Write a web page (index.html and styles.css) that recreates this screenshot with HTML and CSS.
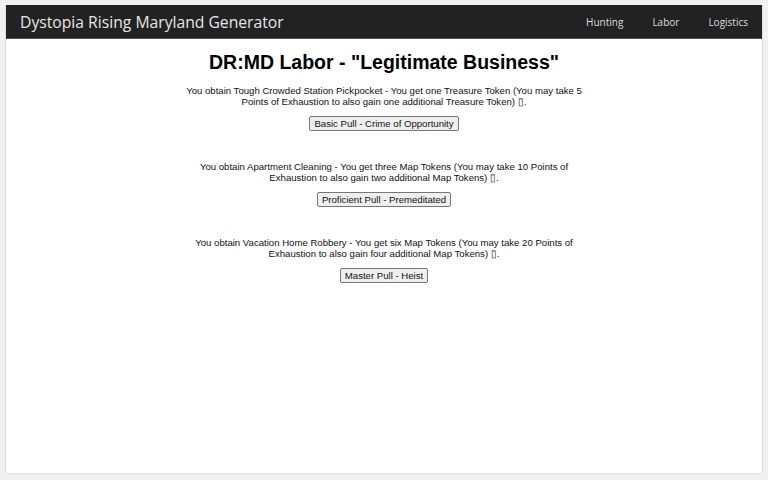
FILE: index.html
```html
<!DOCTYPE html>
<html lang="en">
<head>
    <meta charset="UTF-8">
    <meta name="viewport" content="width=device-width, initial-scale=1.0">
    <title>DR:MD Labor</title>
    <link rel="stylesheet" href="styles.css">
</head>
<body>
    <div class="page">
        <nav class="navbar">
            <span class="brand">Dystopia Rising Maryland Generator</span>
            <div class="nav-links">
                <a href="#">Hunting</a>
                <a href="#">Labor</a>
                <a href="#">Logistics</a>
            </div>
        </nav>

        <div class="content">
            <h1>DR:MD Labor - "Legitimate Business"</h1>

            <div class="pull">
                <p>You obtain Tough Crowded Station Pickpocket - You get one Treasure Token (You may take 5 Points of Exhaustion to also gain one additional Treasure Token) &#x25AF;.</p>
                <button class="pull-button">Basic Pull - Crime of Opportunity</button>
            </div>

            <div class="pull">
                <p>You obtain Apartment Cleaning - You get three Map Tokens (You may take 10 Points of Exhaustion to also gain two additional Map Tokens) &#x25AF;.</p>
                <button class="pull-button">Proficient Pull - Premeditated</button>
            </div>

            <div class="pull">
                <p>You obtain Vacation Home Robbery - You get six Map Tokens (You may take 20 Points of Exhaustion to also gain four additional Map Tokens) &#x25AF;.</p>
                <button class="pull-button">Master Pull - Heist</button>
            </div>
        </div>
    </div>
</body>
</html>
```

FILE: styles.css
```css
body {
    margin: 0;
    padding: 5px;
    background: #f1f1f1;
    font-family: "Liberation Sans", Arial, sans-serif;
}
.page {
    background: white;
    border: 1px solid #e0e0e0;
    border-top: none;
    height: 469px;
    box-sizing: border-box;
}
.navbar {
    background: #222;
    height: 34px;
    display: flex;
    align-items: center;
    justify-content: space-between;
    padding: 0 0 0 14px;
    border-bottom: 1px solid #555;
    box-sizing: border-box;
}
.brand {
    font-family: "Open Sans", sans-serif;
    font-size: 15.7px;
    color: #e6e6e6;
}
.nav-links {
    display: flex;
}
.nav-links a {
    font-family: "Open Sans", sans-serif;
    font-size: 10px;
    color: #ddd;
    text-decoration: none;
    padding: 0 14px 0 15px;
}
.content {
    text-align: center;
    padding-top: 12px;
}
h1 {
    font-size: 19.5px;
    margin: 0 0 11px;
}
.pull {
    margin-bottom: 30px;
}
.pull p {
    font-size: 9.6px;
    line-height: 11px;
    max-width: 400px;
    margin: 0 auto 6px;
    color: #111;
}
.pull-button {
    font-family: "Liberation Sans", Arial, sans-serif;
    font-size: 9.6px;
    padding: 1px 4px;
    background: #efefef;
    border: 1px solid #767676;
    border-radius: 2px;
    color: #111;
}
```
